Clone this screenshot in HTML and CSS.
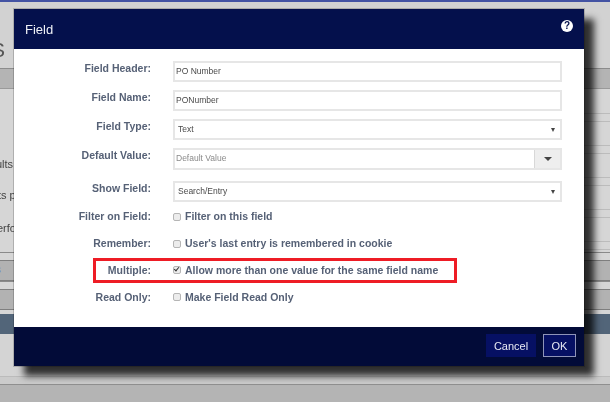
FILE: index.html
```html
<!DOCTYPE html>
<html>
  <head>
    <title>Field</title>
    <link rel="stylesheet" href="styles.css">
  </head>
  <body>
    <div class="page">
      <div class="topLine"></div>
      <div class="titleArea"><span class="pageTitle">S</span></div>
      <div class="grayBar"></div>
      <div class="midArea">
        <div class="sideText">
          <div class="sideOne">ults</div>
          <div class="sideTwo">ts p</div>
          <div class="sideThree">erfo</div>
        </div>
        <div class="sideRows">
          <div class="tableRow"></div>
          <div class="tableRow"></div>
          <div class="tableRow"></div>
          <div class="tableRow"></div>
          <div class="tableRow lastRow"></div>
        </div>
      </div>
      <div class="lightGap"></div>
      <div class="grayRow"><span class="blueText">s</span></div>
      <div class="lightGap"></div>
      <div class="grayRow"></div>
      <div class="thinGap"></div>
      <div class="slateBar"></div>
      <div class="pageEnd"></div>
      <div class="footerOne"></div>
      <div class="footerTwo"></div>
    </div>

    <div class="modal">
      <div class="modalHeader">
        <span class="modalTitle">Field</span>
        <span class="helpIcon">?</span>
      </div>
      <div class="modalBody">
        <div class="fieldRow">
          <label>Field Header:</label>
          <input class="textBox" type="text" value="PO Number">
        </div>
        <div class="fieldRow">
          <label>Field Name:</label>
          <input class="textBox" type="text" value="PONumber">
        </div>
        <div class="fieldRow">
          <label>Field Type:</label>
          <div class="selectBox"><span>Text</span><i class="caret"></i></div>
        </div>
        <div class="fieldRow">
          <label>Default Value:</label>
          <div class="comboBox">
            <input class="comboInput" type="text" placeholder="Default Value">
            <button class="comboBtn"><i class="bigCaret"></i></button>
          </div>
        </div>
        <div class="fieldRow showRow">
          <label>Show Field:</label>
          <div class="selectBox"><span>Search/Entry</span><i class="caret"></i></div>
        </div>
        <div class="checkRow">
          <label>Filter on Field:</label>
          <div class="checkItem"><input type="checkbox"><span>Filter on this field</span></div>
        </div>
        <div class="checkRow">
          <label>Remember:</label>
          <div class="checkItem"><input type="checkbox"><span>User's last entry is remembered in cookie</span></div>
        </div>
        <div class="checkRow">
          <label>Multiple:</label>
          <div class="checkItem"><input type="checkbox" checked><span>Allow more than one value for the same field name</span></div>
        </div>
        <div class="checkRow">
          <label>Read Only:</label>
          <div class="checkItem"><input type="checkbox"><span>Make Field Read Only</span></div>
        </div>
      </div>
      <div class="modalFooter">
        <button class="btnCancel">Cancel</button>
        <button class="btnOk">OK</button>
      </div>
      <div class="highlight"></div>
    </div>
  </body>
</html>
```

FILE: styles.css
```css
html, body { margin: 0; padding: 0; }
body { width: 610px; height: 402px; overflow: hidden; position: relative; background: #d6d6d6; font-family: "Liberation Sans", Arial, sans-serif; filter: blur(0.35px); }

.page { display: flex; flex-direction: column; height: 402px; }
.topLine { height: 2px; background: #4353a3; }
.titleArea { height: 66px; background: #d2d2d2; box-sizing: border-box; padding-top: 36px; }
.pageTitle { display: block; margin-left: -9px; font-size: 21px; line-height: 24px; color: #555; }
.grayBar { height: 21px; background: #b4b4b4; border-top: 1px solid #8c8c8c; border-bottom: 1px solid #9a9a9a; box-sizing: border-box; }

.midArea { display: flex; height: 163px; }
.sideText { width: 300px; position: relative; font-size: 11px; color: #444; overflow: hidden; }
.sideOne { margin-top: 69px; margin-left: -4px; line-height: 13px; }
.sideTwo { margin-top: 18px; margin-left: -2px; line-height: 13px; }
.sideThree { margin-top: 20px; margin-left: -3px; line-height: 13px; }
.sideRows { flex: 1; padding-top: 24px; box-sizing: border-box; }
.tableRow { height: 32px; box-sizing: border-box; border-top: 1px solid #bcbcbc; background: linear-gradient(#d6d6d6 7px, #bcbcbc 7px, #bcbcbc 8px, #d6d6d6 8px); }
.lastRow { height: 11px; }

.lightGap { height: 8px; background: #d6d6d6; border-top: 1px solid #8a8a8a; box-sizing: border-box; }
.grayRow { height: 21px; background: #b2b2b2; border-top: 1px solid #7f7f7f; border-bottom: 1px solid #7f7f7f; box-sizing: border-box; font-size: 10px; line-height: 18px; }
.blueText { display: block; margin-left: -4px; color: #5b8fc0; }
.thinGap { height: 4px; background: #d6d6d6; }
.slateBar { height: 20px; background: #526579; }
.pageEnd { height: 43px; background: #d4d4d4; border-bottom: 1px solid #bbb; box-sizing: border-box; }
.footerOne { height: 8px; background: #cbcbcb; border-bottom: 1px solid #8f8f8f; box-sizing: border-box; }
.footerTwo { flex: 1; background: #b4b4b4; }

.modal { position: absolute; left: 14px; top: 9px; width: 569.5px; height: 356.5px; display: flex; flex-direction: column; background: #fff; box-shadow: 0 0 0 1px rgba(0, 0, 0, 0.18), 10px 10px 7px rgba(0, 0, 0, 0.78); }
.modalHeader { height: 40px; flex: none; box-sizing: border-box; background: #04104c; display: flex; justify-content: space-between; padding: 11px 10.5px 0 11px; }
.modalTitle { font-size: 13px; line-height: 18px; margin-top: 1px; color: #eef0f6; }
.helpIcon { width: 12px; height: 12px; margin-top: 0; border-radius: 50%; background: #fff; color: #04104c; font-size: 10px; font-weight: bold; line-height: 12px; text-align: center; }

.modalBody { flex: 1; padding-top: 12px; box-sizing: border-box; }
.fieldRow { display: grid; grid-template-columns: 137px 389px; column-gap: 22px; margin-bottom: 8px; }
.showRow { margin-top: 11.5px; margin-bottom: 1.4px; }
.fieldRow label, .checkRow label { text-align: right; font-size: 10.5px; font-weight: bold; line-height: 15px; color: #566176; }
.textBox, .selectBox, .comboBox { box-sizing: border-box; height: 21px; width: 389px; border: 2px solid #e6e6e6; background: #fff; font-family: inherit; font-size: 8.5px; color: #4a4a4a; }
.textBox { padding: 0 1px 2px; outline: none; }
.selectBox { display: flex; align-items: center; justify-content: space-between; padding: 0 5px 2px 3px; }
.caret { width: 0; height: 0; margin-top: 2px; border-left: 2px solid transparent; border-right: 2px solid transparent; border-top: 4px solid #444; }
.comboBox { display: flex; height: 21.5px; }
.comboInput { flex: 1; min-width: 0; border: none; padding: 0 1px 2px; outline: none; font-family: inherit; font-size: 8.5px; }
.comboInput::placeholder { color: #8a8a8a; opacity: 1; }
.comboBtn { width: 26px; border: none; border-left: 1px solid #d8d8d8; background: #eeeeee; padding: 0; display: flex; align-items: center; justify-content: center; }
.bigCaret { width: 0; height: 0; border-left: 4px solid transparent; border-right: 4px solid transparent; border-top: 4px solid #444; }

.checkRow { display: grid; grid-template-columns: 137px 389px; column-gap: 22px; height: 26.8px; align-items: center; }
.checkItem { display: flex; align-items: center; gap: 4px; font-size: 10.5px; font-weight: bold; color: #566176; line-height: 15px; }
.checkItem input { appearance: none; -webkit-appearance: none; position: relative; box-sizing: border-box; width: 8px; height: 8px; margin: 0; border: 1px solid #b5b5b5; border-radius: 2px; background: #ececec; }
.checkItem input:checked::after { content: ""; position: absolute; left: 1px; top: -1px; width: 2px; height: 4px; border: solid #333; border-width: 0 1.5px 1.5px 0; transform: rotate(40deg); }

.modalFooter { height: 38.5px; flex: none; box-sizing: border-box; background: #020b38; display: flex; justify-content: flex-end; gap: 7px; padding: 7px 7.5px 0 0; }
.modalFooter button { height: 23px; border: 1px solid #061063; background: #061063; color: #e8eaf4; font-family: inherit; font-size: 11px; padding: 0; }
.btnCancel { width: 50px; }
.modalFooter .btnOk { width: 33px; border-color: #8f94b8; }

.highlight { position: absolute; left: 78.5px; top: 249px; width: 364.5px; height: 25px; box-sizing: border-box; border: 3.5px solid #ee1c25; }
```
